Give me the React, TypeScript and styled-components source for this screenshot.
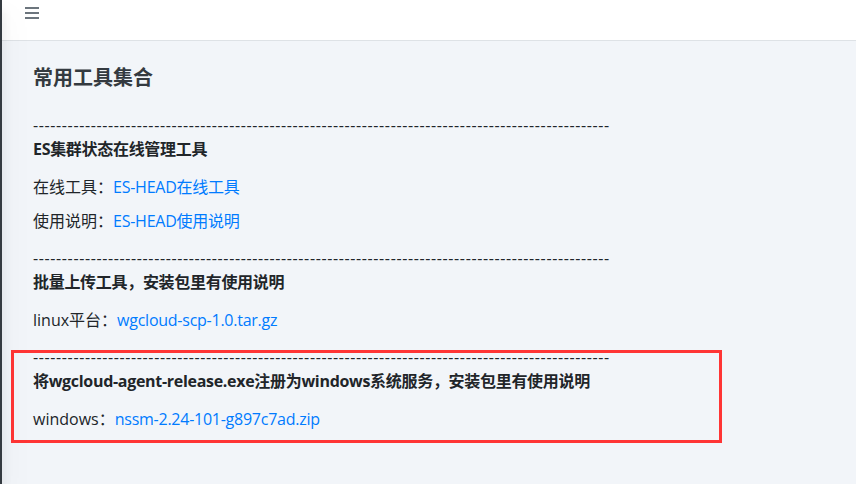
import React from "react";
import styled, { createGlobalStyle } from "styled-components";

const Global = createGlobalStyle`
  html, body { margin: 0; padding: 0; }
  *, *::before, *::after { box-sizing: border-box; }
  body {
    font-family: "Open Sans", "Noto Sans CJK SC", sans-serif;
    color: #212529;
    background: #f2f5f9;
  }
`;

const Shell = styled.div`
  display: flex;
  min-height: 100vh;
  width: 856px;
  overflow: hidden;
`;

const SideEdge = styled.aside`
  position: relative;
  z-index: 2;
  flex: 0 0 2px;
  background: #343a40;
  box-shadow: 0 14px 28px rgba(0, 0, 0, 0.25), 0 10px 10px rgba(0, 0, 0, 0.22);
`;

const Main = styled.div`
  flex: 1;
  display: flex;
  flex-direction: column;
  background: #f2f5f9;
`;

const Navbar = styled.header`
  height: 41px;
  background: #ffffff;
  border-bottom: 1px solid #dee2e6;
  display: flex;
  align-items: flex-start;
  padding: 6px 0 0 23px;
`;

const MenuButton = styled.button`
  border: 0;
  background: none;
  padding: 0;
  margin: 0;
  width: 14px;
  height: 14px;
  display: flex;
  cursor: pointer;
`;

const Content = styled.main`
  padding: 25px 0 0 31px;
`;

const Title = styled.h1`
  margin: 0 0 24px;
  font-size: 20px;
  line-height: 24px;
  font-weight: 700;
  color: #343a40;
`;

const Group = styled.section<{ $first?: boolean; $highlight?: boolean }>`
  position: relative;
  margin-top: ${(p) => (p.$first ? "0" : "14px")};
  ${(p) =>
    p.$highlight
      ? `
    &::after {
      content: "";
      position: absolute;
      left: -22px;
      top: 3.5px;
      width: 711px;
      height: 93px;
      border: 3.5px solid #ff3535;
      pointer-events: none;
    }
  `
      : ""}
`;

const Dashes = styled.div`
  font-size: 16px;
  line-height: 23px;
  height: 23px;
  white-space: nowrap;
  letter-spacing: 0.62px;
  color: #212529;
`;

const Heading = styled.h2`
  margin: 0 0 14px;
  font-size: 16px;
  line-height: 24px;
  font-weight: 700;
  letter-spacing: -0.3px;
  color: #212529;
  white-space: nowrap;
`;

const Row = styled.p`
  margin: 0 0 10px;
  font-size: 16px;
  line-height: 24px;
  white-space: nowrap;
`;

const Link = styled.a`
  color: #007bff;
  text-decoration: none;
  letter-spacing: -0.25px;
`;

const DASH = "-".repeat(100);

type Item = { label: string; link: string };
type Tool = { heading: string; items: Item[]; highlight?: boolean };

const tools: Tool[] = [
  {
    heading: "ES集群状态在线管理工具",
    items: [
      { label: "在线工具：", link: "ES-HEAD在线工具" },
      { label: "使用说明：", link: "ES-HEAD使用说明" },
    ],
  },
  {
    heading: "批量上传工具，安装包里有使用说明",
    items: [{ label: "linux平台：", link: "wgcloud-scp-1.0.tar.gz" }],
  },
  {
    heading: "将wgcloud-agent-release.exe注册为windows系统服务，安装包里有使用说明",
    items: [{ label: "windows：", link: "nssm-2.24-101-g897c7ad.zip" }],
    highlight: true,
  },
];

export default function App() {
  return (
    <>
      <Global />
      <Shell>
        <SideEdge />
        <Main>
          <Navbar>
            <MenuButton aria-label="menu">
              <svg width="14" height="14" viewBox="0 0 14 14">
                <rect x="0" y="1" width="14" height="2" fill="#6c757d" />
                <rect x="0" y="6" width="14" height="2" fill="#6c757d" />
                <rect x="0" y="11" width="14" height="2" fill="#6c757d" />
              </svg>
            </MenuButton>
          </Navbar>
          <Content>
            <Title>常用工具集合</Title>
            {tools.map((t, i) => (
              <Group key={i} $first={i === 0} $highlight={t.highlight}>
                <Dashes>{DASH}</Dashes>
                <Heading>{t.heading}</Heading>
                {t.items.map((it, j) => (
                  <Row key={j}>
                    {it.label}
                    <Link href="#">{it.link}</Link>
                  </Row>
                ))}
              </Group>
            ))}
          </Content>
        </Main>
      </Shell>
    </>
  );
}
